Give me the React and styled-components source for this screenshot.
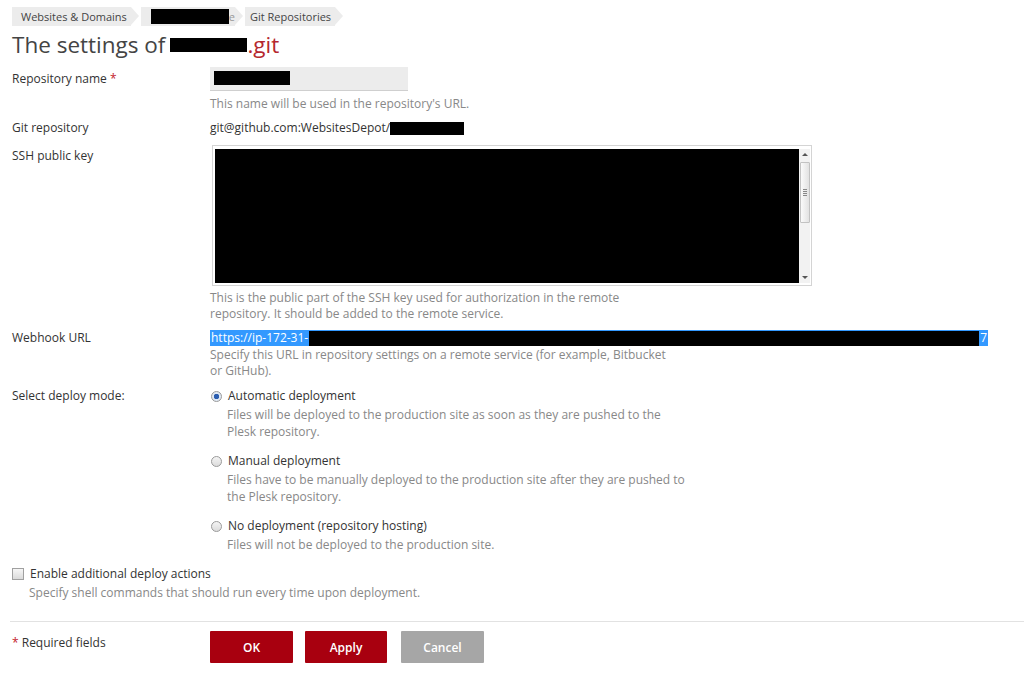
import React from 'react';
import styled, { createGlobalStyle } from 'styled-components';

const GlobalStyle = createGlobalStyle`
  body {
    margin: 0;
    background: #fff;
    font-family: "Open Sans", "DejaVu Sans", sans-serif;
    font-size: 12px;
    color: #333;
  }
`;

const Page = styled.div`
  width: 1024px;
  height: 690px;
  overflow: hidden;
  padding: 7px 0 0 12px;
  box-sizing: border-box;
`;

const Breadcrumbs = styled.div`
  display: flex;
  height: 19px;
  gap: 2px;
`;

const Crumb = styled.div`
  position: relative;
  display: flex;
  align-items: center;
  height: 19px;
  padding: 0 ${(p) => p.pr ?? 4}px 0 ${(p) => p.pl ?? 10}px;
  margin-right: 8px;
  background: #ececec;
  color: #444;
  font-size: 11px;
  white-space: nowrap;

  &::after {
    content: '';
    position: absolute;
    right: -8px;
    top: 0;
    border-top: 9.5px solid transparent;
    border-bottom: 9.5px solid transparent;
    border-left: 8px solid #ececec;
  }
`;

const CrumbTail = styled.span`
  color: #999;
`;

const Redact = styled.span`
  display: inline-block;
  background: #000;
  width: ${(p) => p.w}px;
  height: ${(p) => p.h}px;
  margin-left: ${(p) => p.ml || 0}px;
  flex: none;
`;

const Title = styled.h1`
  margin: 5px 0 0;
  font-size: 22.5px;
  font-weight: 400;
  line-height: 27px;
  color: #444;
  display: flex;
  align-items: center;
`;

const GitSuffix = styled.span`
  color: #b5282e;
`;

const Form = styled.div`
  margin-top: 9px;
`;

const Row = styled.div`
  display: grid;
  grid-template-columns: 198px 1fr;
  margin-top: ${(p) => p.mt || 0}px;
`;

const Label = styled.div`
  line-height: ${(p) => p.lh || 16}px;
  padding-top: ${(p) => p.pt || 0}px;
  color: #333;
`;

const Required = styled.span`
  color: #c4202a;
`;

const Field = styled.div`
  display: flex;
  flex-direction: column;
  align-items: flex-start;
`;

const Value = styled.div`
  line-height: 16px;
  display: flex;
  align-items: center;
`;

const Input = styled.div`
  width: 198px;
  height: 24px;
  box-sizing: border-box;
  background: #ececec;
  border-bottom: 1px solid #cfcfcf;
  padding: 4px 4px;
  display: flex;
  align-items: flex-start;
`;

const Hint = styled.div`
  color: #888;
  line-height: ${(p) => p.lh || 16}px;
  margin-top: ${(p) => p.mt || 0}px;
  max-width: ${(p) => p.mw || 460}px;
  padding-left: ${(p) => p.pl || 0}px;
`;

const TextArea = styled.div`
  margin-left: 2px;
  width: 600px;
  height: 141px;
  box-sizing: border-box;
  border: 1px solid #d4d4d4;
  padding: 3px 1px 2px 2px;
  display: flex;
`;

const KeyBox = styled.div`
  flex: 1;
  background: #000;
`;

const Scrollbar = styled.div`
  width: 11px;
  background: #f2f2f2;
  display: flex;
  flex-direction: column;
  align-items: center;
`;

const Arrow = styled.div`
  width: 0;
  height: 0;
  margin: 4px 0;
  border-left: 3px solid transparent;
  border-right: 3px solid transparent;
  ${(p) => (p.down ? 'border-top: 3px solid #555;' : 'border-bottom: 3px solid #555;')}
`;

const Thumb = styled.div`
  width: 10px;
  height: 61px;
  margin-top: 2px;
  box-sizing: border-box;
  background: linear-gradient(to right, #fafafa, #e2e2e2);
  border: 1px solid #c2c2c2;
  border-radius: 1px;
  display: flex;
  flex-direction: column;
  align-items: center;
  justify-content: center;
  gap: 1px;
`;

const Grip = styled.div`
  width: 4px;
  height: 1px;
  background: #888;
`;

const Spacer = styled.div`
  flex: 1;
`;

const Webhook = styled.div`
  display: flex;
  height: 16px;
  line-height: 16px;
  width: 778px;
`;

const Selected = styled.span`
  background: #3399ff;
  color: #fff;
  padding: 0 1px;
`;

const Masked = styled.span`
  flex: 1;
  background: #000;
  border-top: 1px solid #3399ff;
`;

const Option = styled.label`
  display: flex;
  align-items: center;
  line-height: 16px;
  color: #333;
  margin-top: ${(p) => p.mt || 0}px;
  padding-left: ${(p) => p.pl || 0}px;
`;

const Radio = styled.span`
  width: 9px;
  height: 9px;
  border-radius: 50%;
  border: 1px solid #9a9a9a;
  background: ${(p) =>
    p.checked
      ? 'radial-gradient(circle, #2a5db0 0 2.5px, #dfe8f3 3px)'
      : 'linear-gradient(#f4f4f4, #dcdcdc)'};
  margin-right: 6px;
  flex: none;
`;

const Checkbox = styled.span`
  width: 10px;
  height: 10px;
  border: 1px solid #a0a0a0;
  background: linear-gradient(#f6f6f6, #dadada);
  margin-right: 6px;
  flex: none;
`;

const Divider = styled.div`
  height: 1px;
  background: #e2e2e2;
  margin: 20px 0 0 -2px;
`;

const Footer = styled.div`
  display: grid;
  grid-template-columns: 198px 1fr;
  margin-top: 9px;
`;

const FooterNote = styled.div`
  line-height: 24px;
  color: #333;
`;

const Buttons = styled.div`
  display: flex;
  gap: 12px;
`;

const Button = styled.button`
  width: ${(p) => p.w || 83}px;
  height: 32px;
  border: none;
  border-radius: 1px;
  background: ${(p) => (p.secondary ? '#a6a6a6' : '#a8000f')};
  color: #fff;
  font-family: "Open Sans", "DejaVu Sans", sans-serif;
  font-size: 12px;
  font-weight: 600;
  padding: 0;
  margin-left: ${(p) => p.ml || 0}px;
`;

const App = () => (
  <Page>
    <GlobalStyle />
    <Breadcrumbs>
      <Crumb pl={9}>Websites &amp; Domains</Crumb>
      <Crumb pr={0}>
        <Redact w={78} h={15} />
        <CrumbTail>e</CrumbTail>
      </Crumb>
      <Crumb pl={5}>Git Repositories</Crumb>
    </Breadcrumbs>

    <Title>
      The settings of
      <Redact w={77} h={14} ml={5} />
      <GitSuffix>.git</GitSuffix>
    </Title>

    <Form>
      <Row>
        <Label lh={24}>
          Repository name <Required>*</Required>
        </Label>
        <Field>
          <Input>
            <Redact w={76} h={14} />
          </Input>
          <Hint mt={5}>This name will be used in the repository's URL.</Hint>
        </Field>
      </Row>

      <Row mt={8}>
        <Label>Git repository</Label>
        <Value>
          git@github.com:WebsitesDepot/
          <Redact w={74} h={13} />
        </Value>
      </Row>

      <Row mt={9}>
        <Label pt={3}>SSH public key</Label>
        <Field>
          <TextArea>
            <KeyBox />
            <Scrollbar>
              <Arrow />
              <Thumb>
                <Grip />
                <Grip />
                <Grip />
                <Grip />
              </Thumb>
              <Spacer />
              <Arrow down />
            </Scrollbar>
          </TextArea>
          <Hint mt={4}>
            This is the public part of the SSH key used for authorization in the remote
            repository. It should be added to the remote service.
          </Hint>
        </Field>
      </Row>

      <Row mt={8}>
        <Label>Webhook URL</Label>
        <Field>
          <Webhook>
            <Selected>https://ip-172-31-</Selected>
            <Masked />
            <Selected>7</Selected>
          </Webhook>
          <Hint mw={470} mt={1}>
            Specify this URL in repository settings on a remote service (for example, Bitbucket
            or GitHub).
          </Hint>
        </Field>
      </Row>

      <Row mt={9}>
        <Label>Select deploy mode:</Label>
        <Field>
          <Option pl={1}>
            <Radio checked />
            Automatic deployment
          </Option>
          <Hint lh={17} pl={17} mw={460} mt={2}>
            Files will be deployed to the production site as soon as they are pushed to the
            Plesk repository.
          </Hint>
          <Option pl={1} mt={13}>
            <Radio />
            Manual deployment
          </Option>
          <Hint lh={17} pl={17} mw={460} mt={2}>
            Files have to be manually deployed to the production site after they are pushed to
            the Plesk repository.
          </Hint>
          <Option pl={1} mt={13}>
            <Radio />
            No deployment (repository hosting)
          </Option>
          <Hint lh={17} pl={17} mt={2}>
            Files will not be deployed to the production site.
          </Hint>
        </Field>
      </Row>

      <Option mt={13}>
        <Checkbox />
        Enable additional deploy actions
      </Option>
      <Hint pl={17} mt={3} mw={600}>
        Specify shell commands that should run every time upon deployment.
      </Hint>
    </Form>

    <Divider />

    <Footer>
      <FooterNote>
        <Required>*</Required> Required fields
      </FooterNote>
      <Buttons>
        <Button w={83}>OK</Button>
        <Button w={82}>Apply</Button>
        <Button w={83} ml={2} secondary>
          Cancel
        </Button>
      </Buttons>
    </Footer>
  </Page>
);

export default App;
